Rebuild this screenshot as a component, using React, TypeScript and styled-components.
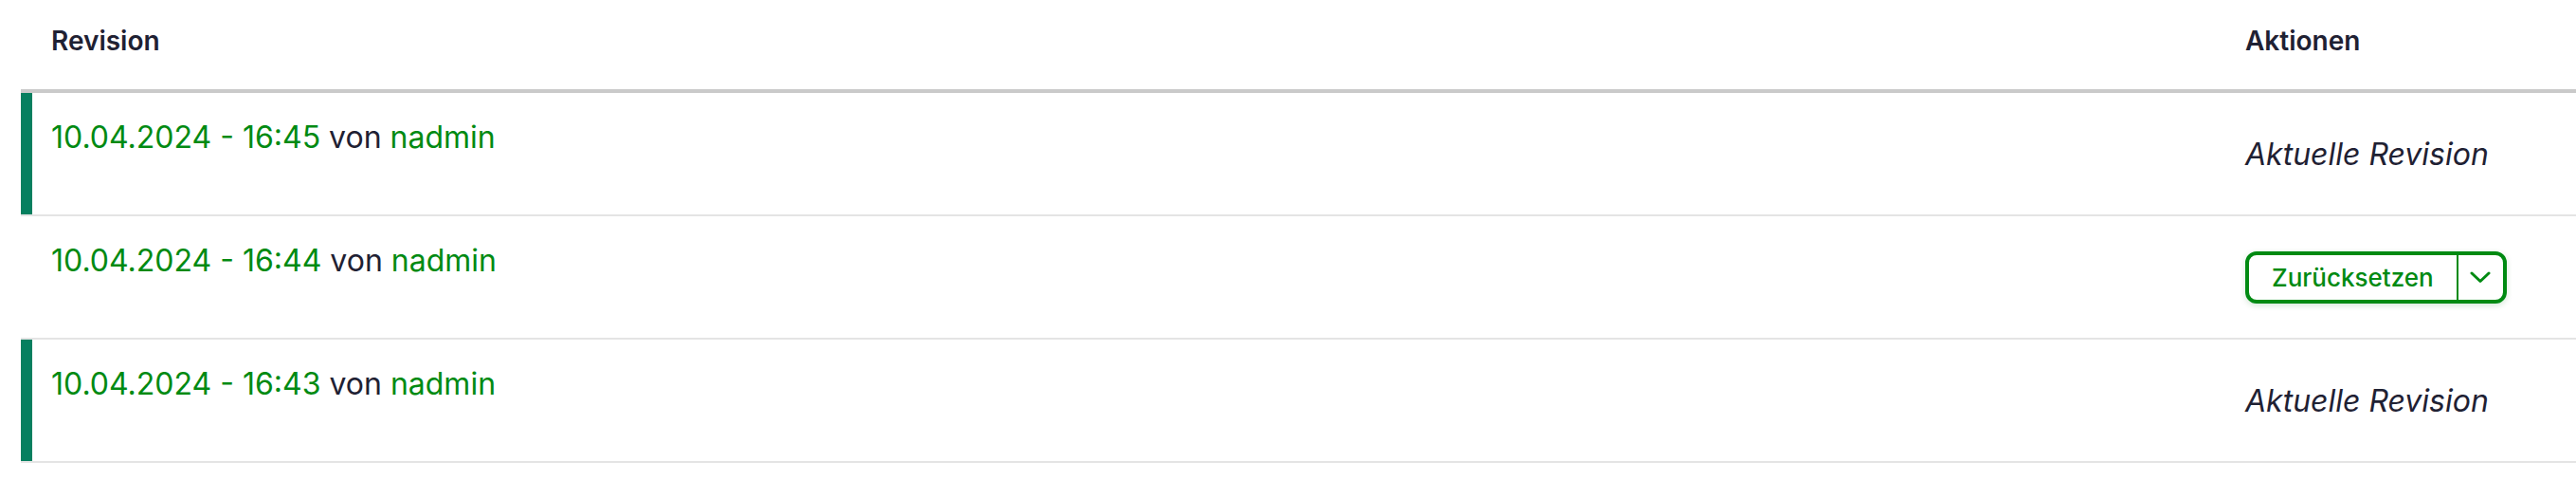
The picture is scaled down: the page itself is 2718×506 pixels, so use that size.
import { Fragment } from "react";
import styled, { createGlobalStyle } from "styled-components";

const GlobalStyle = createGlobalStyle`
  body {
    margin: 0;
    background: #fff;
    color: #1f2133;
    font-family: Inter, "Noto Sans", sans-serif;
  }
`;

const Page = styled.div`
  padding-left: 22px;
`;

const Table = styled.div`
  display: grid;
  grid-template-columns: 1fr 381px;
`;

const HeadCell = styled.div`
  border-bottom: 4px solid #cacaca;
  font-size: 28px;
  font-weight: 600;
  line-height: 34px;
  padding: 26px 32px 34px;
`;

const Cell = styled.div`
  border-bottom: 2px solid #e4e4e4;
  box-sizing: border-box;
  height: 130px;
  padding: 0 32px;
`;

const RevisionCell = styled(Cell)<{ $current?: boolean }>`
  box-shadow: ${({ $current }) => ($current ? "inset 12px 0 0 #067f5f" : "none")};
  font-size: 32px;
  line-height: 48px;
  padding-top: 23px;
`;

const ActionCell = styled(Cell)`
  align-items: center;
  display: flex;
`;

const Green = styled.span`
  color: #008a12;
`;

const CurrentLabel = styled.span`
  font-size: 32px;
  font-style: italic;
`;

const SplitButton = styled.div`
  background: #fff;
  border: 4px solid #008a12;
  border-radius: 12px;
  box-shadow: 0 2px 6px rgba(0, 110, 20, 0.18);
  box-sizing: border-box;
  color: #008a12;
  display: flex;
  height: 55px;
`;

const MainButton = styled.button`
  background: none;
  border: none;
  border-right: 2px solid #008a12;
  color: inherit;
  cursor: pointer;
  font-family: Inter, "Noto Sans", sans-serif;
  font-size: 26px;
  font-weight: 500;
  padding: 0 24px;
`;

const ToggleButton = styled.button`
  align-items: center;
  background: none;
  border: none;
  color: inherit;
  cursor: pointer;
  display: flex;
  justify-content: center;
  padding: 0;
  width: 47px;
`;

type Revision = {
  date: string;
  user: string;
  current: boolean;
};

const revisions: Revision[] = [
  { date: "10.04.2024 - 16:45", user: "nadmin", current: true },
  { date: "10.04.2024 - 16:44", user: "nadmin", current: false },
  { date: "10.04.2024 - 16:43", user: "nadmin", current: true },
];

const Chevron = () => (
  <svg width="22" height="13" viewBox="0 0 22 13" fill="none">
    <polyline
      points="2,2 11,10.5 20,2"
      stroke="currentColor"
      strokeWidth="3"
      strokeLinecap="round"
      strokeLinejoin="round"
    />
  </svg>
);

const App = () => {
  return (
    <>
      <GlobalStyle />
      <Page>
        <Table>
          <HeadCell>Revision</HeadCell>
          <HeadCell>Aktionen</HeadCell>
          {revisions.map((rev) => (
            <Fragment key={rev.date}>
              <RevisionCell $current={rev.current}>
                <Green>{rev.date}</Green> von <Green>{rev.user}</Green>
              </RevisionCell>
              <ActionCell>
                {rev.current ? (
                  <CurrentLabel>Aktuelle Revision</CurrentLabel>
                ) : (
                  <SplitButton>
                    <MainButton>Zurücksetzen</MainButton>
                    <ToggleButton>
                      <Chevron />
                    </ToggleButton>
                  </SplitButton>
                )}
              </ActionCell>
            </Fragment>
          ))}
        </Table>
      </Page>
    </>
  );
};

export default App;
